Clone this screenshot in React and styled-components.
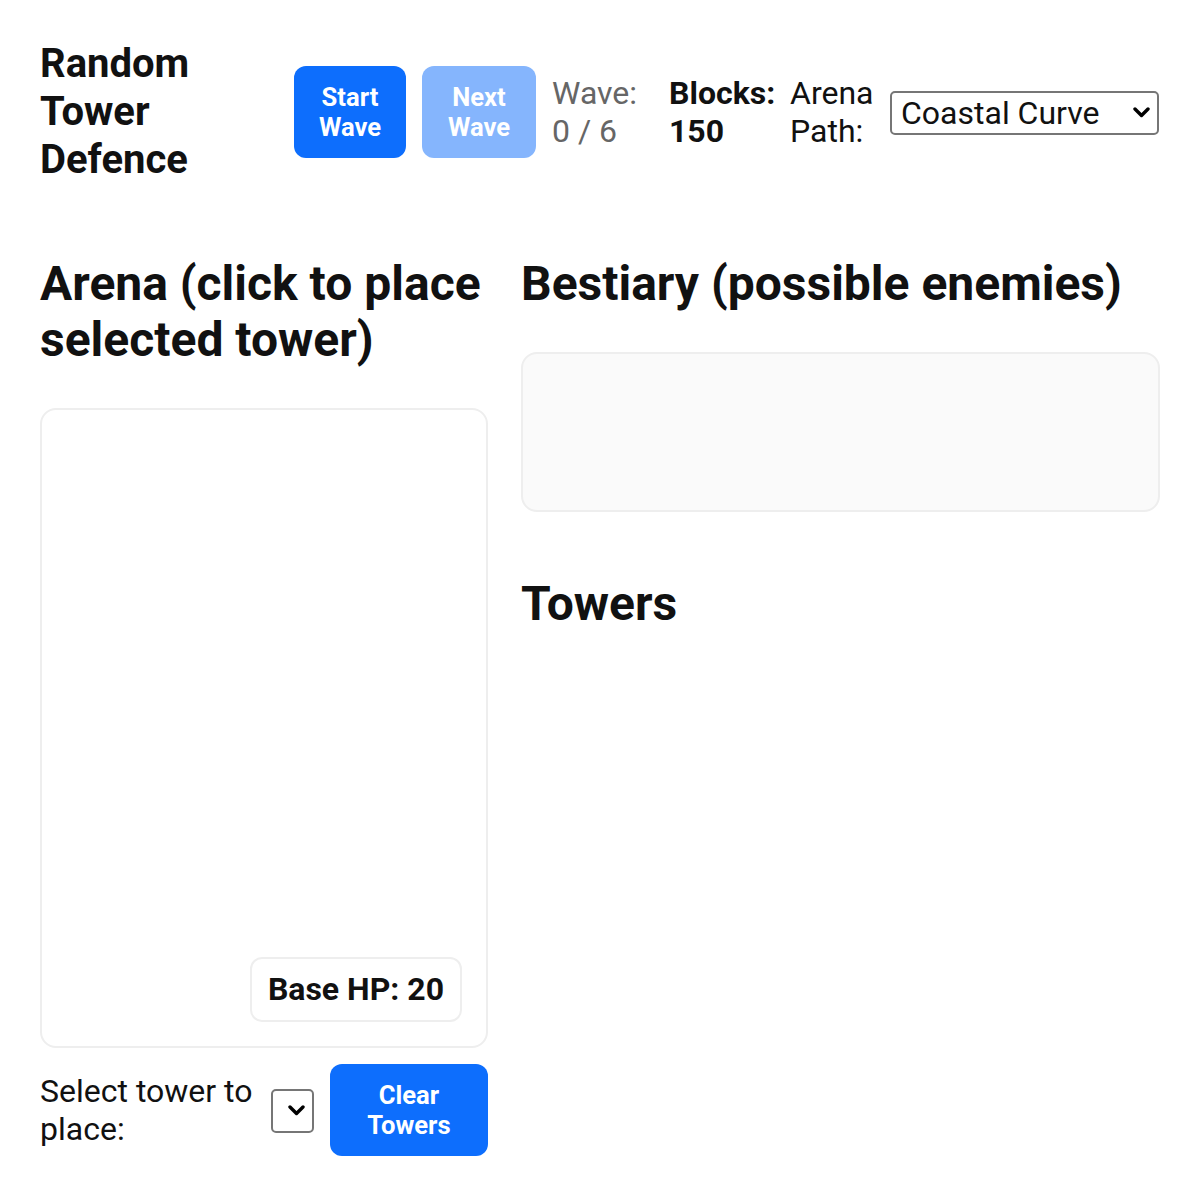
import React from "react";
import styled, { createGlobalStyle } from "styled-components";

const Global = createGlobalStyle`
  html, body { margin: 0; padding: 0; background: #fff; }
  body {
    font-family: Roboto, "Liberation Sans", sans-serif;
    font-size: 32px;
    color: #111;
  }
  * { box-sizing: border-box; }
`;

const Page = styled.div`
  padding: 40px;
`;

const Header = styled.header`
  display: flex;
  align-items: center;
  gap: 16px;
`;

const Title = styled.h1`
  margin: 0;
  width: 238px;
  flex: none;
  font-size: 40px;
  line-height: 48px;
  font-weight: 700;
  color: #111;
`;

const Button = styled.button`
  flex: none;
  width: ${(p) => p.$w}px;
  padding: 16px 20px;
  border: none;
  border-radius: 12px;
  background: #0d6efd;
  color: #fff;
  font-family: Roboto, "Liberation Sans", sans-serif;
  font-size: 25.6px;
  font-weight: 700;
  line-height: 30px;
  cursor: pointer;
  &:disabled {
    opacity: 0.5;
    cursor: default;
  }
`;

const Stat = styled.div`
  flex: none;
  width: ${(p) => p.$w}px;
  color: ${(p) => (p.$muted ? "#666" : "#111")};
  font-weight: ${(p) => (p.$bold ? 700 : 400)};
  line-height: 38px;
`;

const SelectWrap = styled.div`
  position: relative;
  flex: none;
  width: ${(p) => p.$w}px;
  height: 44px;
  margin-top: 1px;
`;

const Select = styled.select`
  appearance: none;
  -webkit-appearance: none;
  width: 100%;
  height: 100%;
  margin: 0;
  padding: ${(p) => (p.$compact ? "0" : "0 36px 0 9px")};
  border: 2px solid #767676;
  border-radius: 5px;
  background: #fff;
  font-family: Roboto, "Liberation Sans", sans-serif;
  font-size: 32px;
  line-height: 38px;
  color: #111;
`;

const Chevron = styled.svg`
  position: absolute;
  right: 9px;
  top: 50%;
  width: 17px;
  height: 11px;
  margin-top: -6px;
  pointer-events: none;
`;

const Dropdown = ({ w, compact, children, ...rest }) => (
  <SelectWrap $w={w}>
    <Select $compact={compact} {...rest}>
      {children}
    </Select>
    <Chevron viewBox="0 0 17 11" aria-hidden="true">
      <path
        d="M2 2 L8.5 8.5 L15 2"
        fill="none"
        stroke="#000"
        strokeWidth="3.4"
        strokeLinecap="round"
        strokeLinejoin="round"
      />
    </Chevron>
  </SelectWrap>
);

const Main = styled.main`
  display: grid;
  grid-template-columns: 448px 1fr;
  column-gap: 33px;
  margin-top: 32px;
  align-items: start;
`;

const Column = styled.section`
  display: flex;
  flex-direction: column;
`;

const H2 = styled.h2`
  margin: 40px 0;
  font-size: 48px;
  line-height: 56px;
  font-weight: 700;
  color: #111;
`;

const Arena = styled.div`
  position: relative;
  width: 448px;
  height: 640px;
  border: 2px solid #eee;
  border-radius: 16px;
  background: #fff;
`;

const Badge = styled.div`
  position: absolute;
  right: 24px;
  bottom: 24px;
  padding: 12px 16px;
  border: 2px solid #eee;
  border-radius: 12px;
  background: #fff;
  font-weight: 700;
  line-height: 37px;
`;

const Controls = styled.div`
  display: flex;
  align-items: center;
  gap: 16px;
  margin-top: 16px;
`;

const Label = styled.label`
  flex: 1;
  line-height: 38px;
`;

const Bestiary = styled.div`
  height: 160px;
  border: 2px solid #eee;
  border-radius: 16px;
  background: #fafafa;
  margin-bottom: 24px;
`;

export default function App() {
  return (
    <>
      <Global />
      <Page>
        <Header>
          <Title>Random Tower Defence</Title>
          <Button $w={112}>Start Wave</Button>
          <Button $w={114} disabled>
            Next Wave
          </Button>
          <Stat $w={101} $muted>
            Wave: 0 / 6
          </Stat>
          <Stat $w={105} $bold>
            Blocks: 150
          </Stat>
          <Stat $w={84}>Arena Path:</Stat>
          <Dropdown w={269} defaultValue="coastal">
            <option value="coastal">Coastal Curve</option>
          </Dropdown>
        </Header>
        <Main>
          <Column>
            <H2>Arena (click to place selected tower)</H2>
            <Arena>
              <Badge>Base HP: 20</Badge>
            </Arena>
            <Controls>
              <Label>Select tower to place:</Label>
              <Dropdown w={43} compact></Dropdown>
              <Button $w={158}>Clear Towers</Button>
            </Controls>
          </Column>
          <Column>
            <H2>Bestiary (possible enemies)</H2>
            <Bestiary />
            <H2>Towers</H2>
          </Column>
        </Main>
      </Page>
    </>
  );
}
